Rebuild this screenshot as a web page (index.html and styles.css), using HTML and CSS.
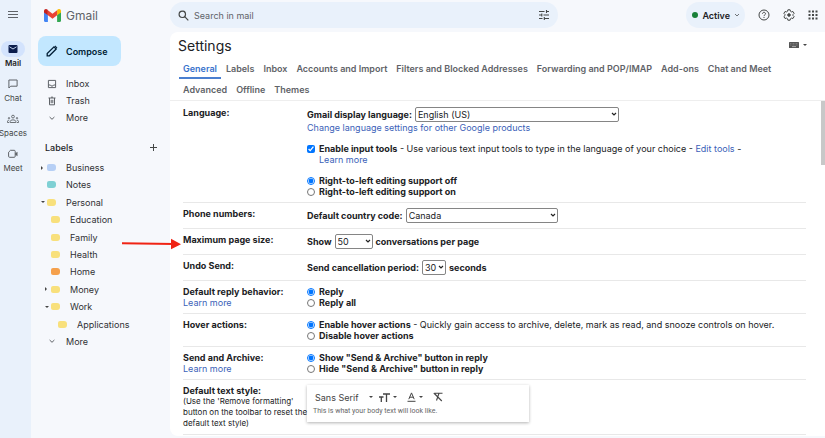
FILE: index.html
```html
<!DOCTYPE html>
<html lang="en">

<head>
    <meta charset="utf-8">
    <meta name="viewport" content="width=device-width, initial-scale=1.0">
    <title>Settings - Gmail</title>
    <link rel="stylesheet" href="styles.css">
</head>

<body>

<!-- app rail -->
<nav class="rail">
    <button class="icon-btn menu-btn" aria-label="Main menu">
        <svg width="12" height="12" viewBox="0 0 12 12"><path d="M1 2.5h10M1 5.5h10M1 8.5h10" stroke="#5f6368" stroke-width="1.1"/></svg>
    </button>
    <a href="#" class="rail-item active">
        <span class="rail-icon">
            <svg width="10" height="8" viewBox="0 0 10 8"><rect x="0.5" width="9" height="8" rx="1" fill="#0b1d4d"/><path d="M1.5 1.8 5 4l3.5-2.2" fill="none" stroke="#d3e3fd" stroke-width="0.9"/></svg>
        </span>
        Mail
    </a>
    <a href="#" class="rail-item">
        <span class="rail-icon">
            <svg width="10" height="10" viewBox="0 0 10 10"><path d="M.9 9V1h8.2v6.2H2.7z" fill="none" stroke="#5f6368" stroke-linejoin="round"/></svg>
        </span>
        Chat
    </a>
    <a href="#" class="rail-item">
        <span class="rail-icon">
            <svg width="12" height="10" viewBox="0 0 12 10" fill="none" stroke="#5f6368" stroke-width="0.9"><circle cx="6" cy="2.6" r="1.4"/><path d="M3.2 8.5V7.2c0-1.8 5.6-1.8 5.6 0v1.3z"/><circle cx="2" cy="4.2" r=".7"/><circle cx="10" cy="4.2" r=".7"/><path d="M2.2 8.5H.5V7.3c0-.7.6-1 1.7-1M9.8 8.5h1.7V7.3c0-.7-.6-1-1.7-1"/></svg>
        </span>
        Spaces
    </a>
    <a href="#" class="rail-item">
        <span class="rail-icon">
            <svg width="10" height="10" viewBox="0 0 10 10"><path d="M2.5 1.3h3.7a1 1 0 0 1 1 1v5a1 1 0 0 1-1 1H1.6a1 1 0 0 1-1-1V3.2z" fill="none" stroke="#5f6368"/><path d="M7.2 4.2 9.5 2.7v4.6L7.2 5.8z" fill="#5f6368"/></svg>
        </span>
        Meet
    </a>
</nav>

<!-- mailbox sidebar -->
<aside class="sidebar">
    <div class="logo">
        <svg width="17" height="13" viewBox="0 0 17 13">
            <path d="M0 2.2V11.8c0 .6.5 1.2 1.2 1.2h2.7V6z" fill="#4285f4"/>
            <path d="M17 2.2V11.8c0 .6-.5 1.2-1.2 1.2h-2.7V6z" fill="#34a853"/>
            <path d="M13.1 1.2V6.3L17 3.4V2C17 .2 15-.6 13.6.5z" fill="#fbbc04"/>
            <path d="M3.9 6.3V1.2L8.5 4.7l4.6-3.5v5.1L8.5 9.8z" fill="#ea4335"/>
            <path d="M0 2v1.4l3.9 2.9V1.2L3.4.5C2-.6 0 .2 0 2z" fill="#c5221f"/>
        </svg>
        <span>Gmail</span>
    </div>
    <button class="compose">
        <svg width="12" height="12" viewBox="0 0 12 12" fill="none" stroke="#001d35" stroke-width="1.3"><path d="M1.2 10.8V8.6L8 1.8l2.2 2.2-6.8 6.8z"/><path d="m8.6 1.2.7-.6 2.1 2.1-.7.7z" fill="#001d35" stroke="none"/></svg>
        Compose
    </button>
    <ul class="folders">
        <li>
            <svg class="folder-icon" viewBox="0 0 10 10" fill="none" stroke="#5f6368"><path d="M1.4 1.4h7.2v7.2H1.4zM1.4 6h2c.4 1.5 2.8 1.5 3.2 0h2"/></svg>
            <a href="#">Inbox</a>
        </li>
        <li>
            <svg class="folder-icon" viewBox="0 0 10 10" fill="none" stroke="#5f6368"><path d="M1.5 2h7M4 1.2h2M2.5 2v6.8h5V2M4.2 3.8v3.4M5.8 3.8v3.4"/></svg>
            <a href="#">Trash</a>
        </li>
        <li>
            <svg class="folder-icon" viewBox="0 0 10 10" fill="none" stroke="#5f6368"><path d="m2.6 4 2.4 2.3L7.4 4"/></svg>
            <a href="#">More</a>
        </li>
    </ul>
    <div class="labels-head">
        <h2>Labels</h2>
        <button class="icon-btn" aria-label="Create new label">
            <svg width="9" height="9" viewBox="0 0 9 9"><path d="M4.5 1v7M1 4.5h7" stroke="#444746"/></svg>
        </button>
    </div>
    <ul class="folders labels">
        <li><span class="caret closed"></span><span class="tag blue"></span><a href="#">Business</a></li>
        <li><span class="tag teal"></span><a href="#">Notes</a></li>
        <li><span class="caret open"></span><span class="tag"></span><a href="#">Personal</a></li>
        <li class="sub"><span class="tag"></span><a href="#">Education</a></li>
        <li class="sub"><span class="tag"></span><a href="#">Family</a></li>
        <li class="sub"><span class="tag"></span><a href="#">Health</a></li>
        <li class="sub"><span class="tag orange"></span><a href="#">Home</a></li>
        <li class="sub"><span class="caret closed"></span><span class="tag"></span><a href="#">Money</a></li>
        <li class="sub"><span class="caret open"></span><span class="tag"></span><a href="#">Work</a></li>
        <li class="sub-sub"><span class="tag"></span><a href="#">Applications</a></li>
        <li>
            <svg class="folder-icon" viewBox="0 0 10 10" fill="none" stroke="#5f6368"><path d="m2.6 4 2.4 2.3L7.4 4"/></svg>
            <a href="#">More</a>
        </li>
    </ul>
    <svg class="arrow" width="60" height="12" viewBox="0 0 60 12"><path d="M0 5.3 52 6" stroke="#f02314" stroke-width="2"/><path d="M49 .8 59 6.2 49 11.2z" fill="#f02314"/></svg>
</aside>

<div class="content">
    <header>
        <form class="search">
            <svg width="11" height="11" viewBox="0 0 11 11" fill="none" stroke="#444746" stroke-width="1.2"><circle cx="4.3" cy="4.3" r="3.2"/><path d="m6.7 6.7 3.6 3.6"/></svg>
            <input type="text" placeholder="Search in mail" aria-label="Search in mail">
            <button type="button" class="icon-btn" aria-label="Show search options">
                <svg width="12" height="12" viewBox="0 0 12 12" stroke="#444746" stroke-width="1.1"><path d="M1 2.5h5.5M8.5 2.5H11M8.5 1v3M1 6h2.5M3.8 4.5v3M5.5 6H11M1 9.5h3.5M6.3 8v3M6.3 9.5H11"/></svg>
            </button>
        </form>
        <button class="status">
            <span class="dot"></span>Active
            <svg width="6" height="6" viewBox="0 0 6 6"><path d="m1 2 2 2 2-2" fill="none" stroke="#5f6368" stroke-width="0.9"/></svg>
        </button>
        <button class="icon-btn" aria-label="Support">
            <svg width="12" height="12" viewBox="0 0 12 12" fill="none" stroke="#444746"><circle cx="6" cy="6" r="5"/><path d="M4.5 4.8c0-2 3-2 3 0 0 1-1.5 1.1-1.5 2.3M6 8v1"/></svg>
        </button>
        <button class="icon-btn" aria-label="Settings">
            <svg width="12" height="12" viewBox="0 0 12 12" fill="none" stroke="#444746"><path d="M4.9.8h2.2l.4 1.5 1 .6 1.5-.4 1.1 1.9L10 5.5v1l1.1 1.1L10 9.5l-1.5-.4-1 .6-.4 1.5H4.9l-.4-1.5-1-.6-1.5.4L.9 7.6 2 6.5v-1L.9 4.4 2 2.5l1.5.4 1-.6z" stroke-linejoin="round"/><circle cx="6" cy="6" r="1.3" fill="#444746"/></svg>
        </button>
        <button class="icon-btn" aria-label="Google apps">
            <svg width="10" height="10" viewBox="0 0 10 10" fill="#444746"><path d="M.5.5h2v2h-2zM4 .5h2v2H4zM7.500.5h2v2h-2zM.5 4h2v2h-2zM4 4h2v2H4zM7.5 4h2v2h-2zM.5 7.5h2v2h-2zM4 7.5h2v2H4zM7.5 7.5h2v2h-2z"/></svg>
        </button>
    </header>

    <main>
        <div class="title">
            <h1>Settings</h1>
            <button class="icon-btn input-tool" aria-label="Select input tool">
                <svg width="10" height="6" viewBox="0 0 10 6"><rect width="10" height="6" rx=".5" fill="#555"/><path d="M1 1.500h8M1 3h8" stroke="#999" stroke-width=".6" stroke-dasharray="1 .5"/><path d="M3 4.600h4" stroke="#ccc" stroke-width=".7"/></svg>
                <span class="caret open"></span>
            </button>
        </div>
        <nav class="tabs">
            <a href="#" class="active">General</a>
            <a href="#">Labels</a>
            <a href="#">Inbox</a>
            <a href="#">Accounts and Import</a>
            <a href="#">Filters and Blocked Addresses</a>
            <a href="#">Forwarding and POP/IMAP</a>
            <a href="#">Add-ons</a>
            <a href="#">Chat and Meet</a>
            <a href="#">Advanced</a>
            <a href="#">Offline</a>
            <a href="#">Themes</a>
        </nav>

        <div class="pane">
            <form class="settings">
                <section class="row">
                    <h3>Language:</h3>
                    <div>
                        <div class="line">
                            <label for="lang">Gmail display language:</label>
                            <select id="lang" class="wide"><option>English (US)</option></select>
                        </div>
                        <a href="#">Change language settings for other Google products</a>
                        <div class="option spaced">
                            <input type="checkbox" id="tools" checked>
                            <span><label for="tools">Enable input tools</label> - Use various text input tools to type in the language of your choice - <a href="#">Edit tools</a> -<br><a href="#">Learn more</a></span>
                        </div>
                        <div class="option"><input type="radio" name="rtl" id="rtl-off" checked><label for="rtl-off">Right-to-left editing support off</label></div>
                        <div class="option"><input type="radio" name="rtl" id="rtl-on"><label for="rtl-on">Right-to-left editing support on</label></div>
                    </div>
                </section>
                <section class="row">
                    <h3>Phone numbers:</h3>
                    <div class="line">
                        <label for="country">Default country code:</label>
                        <select id="country" class="medium"><option>Canada</option></select>
                    </div>
                </section>
                <section class="row">
                    <h3>Maximum page size:</h3>
                    <div class="line">
                        <label for="size">Show</label>
                        <select id="size" class="small"><option>50</option></select>
                        <b>conversations per page</b>
                    </div>
                </section>
                <section class="row">
                    <h3>Undo Send:</h3>
                    <div class="line">
                        <label for="undo">Send cancellation period:</label>
                        <select id="undo" class="tiny"><option>30</option></select>
                        <b>seconds</b>
                    </div>
                </section>
                <section class="row">
                    <div>
                        <h3>Default reply behavior:</h3>
                        <a href="#">Learn more</a>
                    </div>
                    <div>
                        <div class="option"><input type="radio" name="reply" id="reply" checked><label for="reply">Reply</label></div>
                        <div class="option"><input type="radio" name="reply" id="reply-all"><label for="reply-all">Reply all</label></div>
                    </div>
                </section>
                <section class="row">
                    <h3>Hover actions:</h3>
                    <div>
                        <div class="option"><input type="radio" name="hover" id="hover-on" checked><span><label for="hover-on">Enable hover actions</label> - Quickly gain access to archive, delete, mark as read, and snooze controls on hover.</span></div>
                        <div class="option"><input type="radio" name="hover" id="hover-off"><label for="hover-off">Disable hover actions</label></div>
                    </div>
                </section>
                <section class="row">
                    <div>
                        <h3>Send and Archive:</h3>
                        <a href="#">Learn more</a>
                    </div>
                    <div>
                        <div class="option"><input type="radio" name="archive" id="archive-show" checked><label for="archive-show">Show "Send &amp; Archive" button in reply</label></div>
                        <div class="option"><input type="radio" name="archive" id="archive-hide"><label for="archive-hide">Hide "Send &amp; Archive" button in reply</label></div>
                    </div>
                </section>
                <section class="row">
                    <div>
                        <h3>Default text style:</h3>
                        <p class="hint">(Use the 'Remove formatting' button on the toolbar to reset the default text style)</p>
                    </div>
                    <div class="editor">
                        <div class="toolbar">
                            <button type="button" class="font-name">Sans Serif <span class="caret open"></span></button>
                            <button type="button" aria-label="Size">
                                <svg width="11" height="9" viewBox="0 0 11 9" fill="none" stroke="#444" stroke-width="1.3"><path d="M4 1h7M7.5 1v8M0 4h4.5M2.3 4v5"/></svg>
                                <span class="caret open"></span>
                            </button>
                            <button type="button" class="divided" aria-label="Text color">
                                <svg width="9" height="10" viewBox="0 0 9 10" fill="none" stroke="#444"><path d="M1.8 7.2 4.5.9l2.7 6.3M2.7 5.2h3.6M.5 9.3h8"/></svg>
                                <span class="caret open"></span>
                            </button>
                            <button type="button" class="divided" aria-label="Remove formatting">
                                <svg width="10" height="10" viewBox="0 0 10 10" fill="none" stroke="#444" stroke-width="1.1"><path d="M2 1.2h7.5M6 1.2 3.5 8.5M.8 1l8 8"/></svg>
                            </button>
                        </div>
                        <p class="sample">This is what your body text will look like.</p>
                    </div>
                </section>
            </form>
            <div class="thumb"></div>
        </div>
    </main>
</div>

</body>

</html>
```

FILE: styles.css
```css
*
{
    box-sizing: border-box;
    margin: 0;
    padding: 0;
}

body
{
    display: flex;
    height: 100vh;
    overflow: hidden;
    background: #f6f8fc;
    color: #202124;
    font-family: Inter, sans-serif;
    font-size: 9px;
    line-height: 11px;
}

a
{
    color: #3b5fb8;
    text-decoration: none;
}

ul
{
    list-style: none;
}

svg
{
    display: block;
    flex: none;
}

button
{
    display: flex;
    align-items: center;
    border: none;
    background: none;
    color: inherit;
    font: inherit;
    cursor: pointer;
}

/* app rail */
.rail
{
    display: flex;
    flex-direction: column;
    align-items: center;
    flex: none;
    width: 31px;
    padding: 9px 5px 0 0;
    background: #e9f1fb;
}

.menu-btn
{
    margin-bottom: 20px;
}

.rail-item
{
    display: flex;
    flex-direction: column;
    align-items: center;
    height: 35px;
    color: #444746;
    font-size: 8px;
}

.rail-item.active
{
    color: #1f1f1f;
    font-weight: 600;
}

.rail-icon
{
    display: flex;
    align-items: center;
    justify-content: center;
    width: 24px;
    height: 16px;
    margin-bottom: 1px;
    border-radius: 8px;
}

.active .rail-icon
{
    background: #d3e3fd;
}

/* sidebar */
.sidebar
{
    position: relative;
    flex: none;
    width: 139px;
    padding: 7px 0 0 7px;
}

.logo
{
    display: flex;
    align-items: center;
    gap: 5px;
    height: 16px;
    padding-left: 6px;
    color: #5f6368;
    font-size: 12px;
}

.compose
{
    gap: 8px;
    height: 30px;
    margin: 13px 0 9px;
    padding: 0 13px 0 8px;
    border-radius: 8px;
    background: #c2e7ff;
    color: #001d35;
    font-weight: 600;
}

.folders li
{
    position: relative;
    display: flex;
    align-items: center;
    height: 17px;
    padding-left: 9px;
}

.labels
{
    display: flex;
    flex-direction: column;
    justify-content: space-between;
    height: 191px;
}

.folders a
{
    color: #303134;
}

.folders .sub
{
    padding-left: 13px;
}

.folders .sub-sub
{
    padding-left: 20px;
}

.folder-icon
{
    width: 10px;
    height: 10px;
    margin-right: 9px;
}

.labels-head
{
    display: flex;
    align-items: center;
    justify-content: space-between;
    height: 20px;
    margin: 11px 12px 2px 7px;
}

.labels-head h2
{
    font-size: 9px;
    font-weight: 500;
}

.tag
{
    width: 9px;
    height: 7px;
    margin-right: 10px;
    border-radius: 2px 3px 3px 2px;
    background: #f8e07c;
}

.tag.blue
{
    background: #b6cff5;
}

.tag.teal
{
    background: #7fd0d4;
}

.tag.orange
{
    background: #f5a04c;
}

.caret
{
    display: inline-block;
    border: 2px solid transparent;
}

.caret.open
{
    border-top-color: #444;
    border-bottom: 0;
}

.caret.closed
{
    border-left-color: #444;
    border-right: 0;
}

.folders .caret
{
    position: absolute;
    left: 3px;
}

.folders .sub .caret
{
    left: 7px;
}

.arrow
{
    position: absolute;
    top: 238px;
    left: 91px;
    z-index: 1;
}

/* top bar */
.content
{
    display: flex;
    flex-direction: column;
    flex: 1;
    min-width: 0;
}

header
{
    display: flex;
    align-items: center;
    flex: none;
    gap: 13px;
    height: 32px;
    padding: 0 7px 2px 0;
}

.search
{
    display: flex;
    align-items: center;
    flex: 0 1 388px;
    gap: 5px;
    height: 26px;
    margin-right: auto;
    padding: 0 8px;
    border-radius: 13px;
    background: #e9f1fb;
}

.search input
{
    flex: 1;
    min-width: 0;
    border: none;
    outline: none;
    background: none;
    font: inherit;
}

.search input::placeholder
{
    color: #5f6368;
}

.status
{
    gap: 4px;
    height: 26px;
    padding: 0 5px 0 6px;
    border-radius: 13px;
    background: #e9f1fb;
    font-weight: 600;
}

.dot
{
    width: 6px;
    height: 6px;
    border-radius: 50%;
    background: #188038;
}

/* settings panel */
main
{
    display: flex;
    flex-direction: column;
    flex: 1;
    min-height: 0;
    margin-bottom: 2px;
    border-radius: 8px 0 0 8px;
    background: #fff;
}

.title
{
    display: flex;
    justify-content: space-between;
    height: 26px;
    padding: 5px 18px 0 8px;
}

.title h1
{
    font-size: 14px;
    font-weight: 400;
    line-height: 18px;
}

.input-tool
{
    gap: 4px;
    height: 16px;
}

.tabs
{
    display: flex;
    flex-wrap: wrap;
    gap: 0 1px;
    padding: 0 19px 0 9px;
}

.tabs a
{
    height: 21px;
    padding: 0 4px;
    color: #5f6368;
    font-weight: 600;
    line-height: 22px;
}

.tabs .active
{
    border-bottom: 2px solid #4a7fd0;
    color: #3a73cc;
}

.pane
{
    position: relative;
    flex: 1;
    min-height: 0;
    border-top: 1px solid #eee;
}

.settings
{
    height: 100%;
    padding: 1px 19px 0 13px;
    overflow-y: auto;
    scrollbar-width: none;
}

.thumb
{
    position: absolute;
    top: 0;
    right: 0;
    width: 4px;
    height: 19%;
    background: #c8c8c8;
}

.row
{
    display: grid;
    grid-template-columns: 124px 1fr;
    align-items: start;
    padding: 5px 0;
    border-bottom: 1px solid #e8e8e8;
}

.row h3,
.row label,
.row b
{
    font-size: 9px;
    font-weight: 700;
}

.line
{
    display: flex;
    align-items: center;
    gap: 3px;
}

select
{
    height: 15px;
    padding: 0 2px;
    border: 1px solid #858585;
    border-radius: 2px;
    appearance: none;
    background: #fff url("data:image/svg+xml,%3Csvg xmlns='http://www.w3.org/2000/svg' width='6' height='5'%3E%3Cpath d='m1 1 2 2 2-2' fill='none' stroke='%23222' stroke-width='1.2'/%3E%3C/svg%3E") no-repeat right 1px center;
    color: #202124;
    font: inherit;
}

.wide
{
    width: 204px;
}

.medium
{
    width: 152px;
}

.small
{
    width: 38px;
}

.tiny
{
    width: 24px;
}

.option
{
    display: flex;
    gap: 4px;
}

.option.spaced
{
    margin: 10px 0;
}

.option input
{
    flex: none;
    width: 8px;
    height: 8px;
    margin-top: 2px;
}

.hint
{
    margin-right: -4px;
    font-size: 8px;
}

.editor
{
    width: 222px;
    padding: 6px;
    box-shadow: 0 1px 3px rgba(0, 0, 0, 0.3);
}

.toolbar
{
    display: flex;
    align-items: center;
    gap: 6px;
    height: 12px;
    padding-left: 2px;
    color: #444;
}

.toolbar button
{
    gap: 3px;
}

.toolbar .font-name
{
    gap: 10px;
}

.toolbar .divided
{
    padding-left: 4px;
}

.sample
{
    margin-top: 4px;
    color: #666;
    font-family: Roboto, sans-serif;
    font-size: 7px;
    line-height: 9px;
}
```
